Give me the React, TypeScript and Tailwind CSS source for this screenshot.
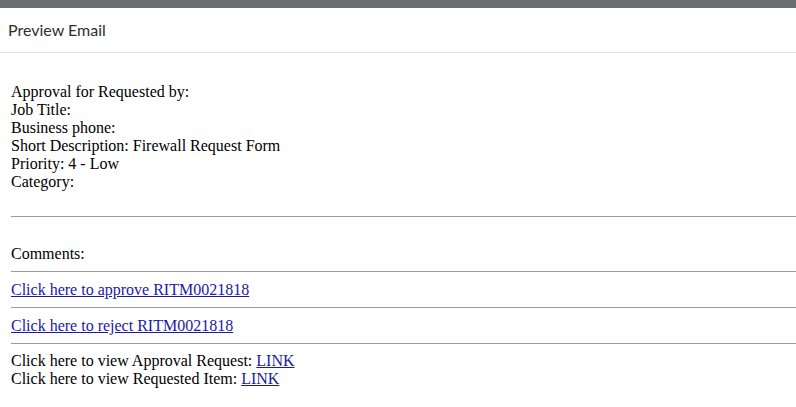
export default function App() {
  const serif = { fontFamily: '"Liberation Serif", "Times New Roman", serif' };
  return (
    <div className="w-[796px] h-[407px] bg-white overflow-hidden">
      <div className="h-2 bg-[#6b6e70]" />
      <div className="h-[45px] flex items-center px-2 border-b border-[#e3e3e3]">
        <span className="text-[16px] text-[#2e2e2e] font-['Lato',sans-serif]">Preview Email</span>
      </div>
      <div className="pl-[11px] pt-[30px] text-[16px] leading-[18px] text-black" style={serif}>
        <div>Approval for Requested by:</div>
        <div>Job Title:</div>
        <div>Business phone:</div>
        <div>Short Description: Firewall Request Form</div>
        <div>Priority: 4 - Low</div>
        <div>Category:</div>
        <div className="mt-[25px] border-t border-[#9c9c9c]" />
        <div className="pt-[28px] pb-[8px]">Comments:</div>
        <div className="border-t border-[#9c9c9c]" />
        <div className="pt-[9px] pb-[8px]">
          <a href="#" className="text-[#1a1aa6] underline">Click here to approve RITM0021818</a>
        </div>
        <div className="border-t border-[#9c9c9c]" />
        <div className="pt-[9px] pb-[8px]">
          <a href="#" className="text-[#1a1aa6] underline">Click here to reject RITM0021818</a>
        </div>
        <div className="border-t border-[#9c9c9c]" />
        <div className="pt-[8px]">
          <div>
            Click here to view Approval Request: <a href="#" className="text-[#1a1aa6] underline">LINK</a>
          </div>
          <div>
            Click here to view Requested Item: <a href="#" className="text-[#1a1aa6] underline">LINK</a>
          </div>
        </div>
      </div>
    </div>
  );
}
